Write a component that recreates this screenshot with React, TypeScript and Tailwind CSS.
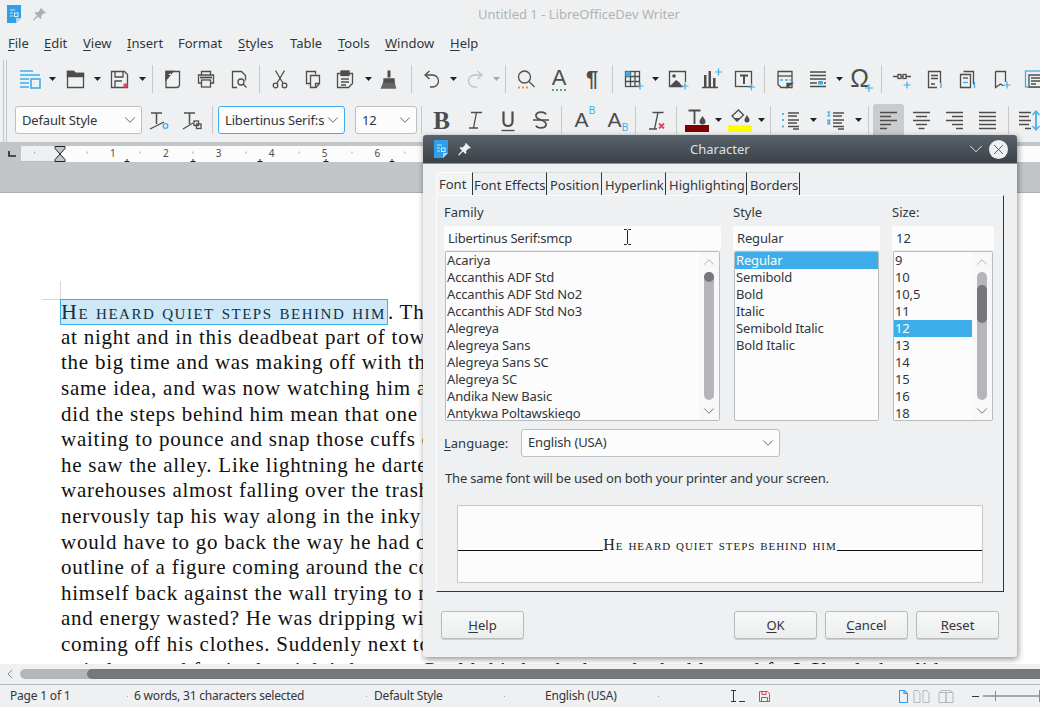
import type { ReactNode } from "react";
import { ChevronDown, ChevronLeft, ChevronUp, X } from "lucide-react";

const INK = "#4d4d4d";
const BLUE = "#3daee9";

function Ic({ children }: { children: ReactNode }) {
  return (
    <svg width="24" height="24" viewBox="0 0 24 24" fill="none" stroke={INK} strokeWidth="1.3">
      {children}
    </svg>
  );
}

function Btn({ children, className = "" }: { children: ReactNode; className?: string }) {
  return <div className={`w-[33px] h-[32px] shrink-0 flex items-center justify-center ${className}`}>{children}</div>;
}

function Arrow({ className = "w-[12px]", off = false }: { className?: string; off?: boolean }) {
  return (
    <div className={`shrink-0 flex items-center justify-center ${className}`}>
      <svg width="7" height="4" viewBox="0 0 7 4">
        <path d="M0 0h7L3.5 4z" fill={off ? "#a5a7a9" : "#222"} />
      </svg>
    </div>
  );
}

function Sep() {
  return (
    <div className="w-[8px] shrink-0 flex justify-center">
      <div className="w-px h-[28px] bg-[#c6c8ca]" />
    </div>
  );
}

function Plus({ x = 18, y = 18 }: { x?: number; y?: number }) {
  return <path d={`M${x - 3.5} ${y}h7M${x} ${y - 3.5}v7`} stroke={BLUE} strokeWidth="1.2" />;
}

function Combo({ text, className, focus = false }: { text: string; className: string; focus?: boolean }) {
  return (
    <div
      className={`h-[28px] shrink-0 flex items-center rounded-[3px] border bg-[#fcfcfc] pl-[6px] pr-[2px] text-[13px] tracking-[-0.15px] text-[#31363b] ${
        focus ? "border-[#3daee9]" : "border-[#bcbfc1]"
      } ${className}`}
    >
      <span className="flex-1 overflow-hidden whitespace-nowrap">{text}</span>
      <ChevronDown size={18} strokeWidth={1} color="#31363b" className="shrink-0" />
    </div>
  );
}

function DocIcon({ className = "" }: { className?: string }) {
  return (
    <svg width="14" height="18" viewBox="0 0 14 18" className={className}>
      <path d="M0 0h14v13l-5 5H0z" fill="#2f9fe8" />
      <path d="M3 5h5M3 8h3M3 11h3" stroke="#bfe3fa" strokeWidth="1" />
      <rect x="7.5" y="8" width="3.5" height="3.5" fill="none" stroke="#d8effc" strokeWidth="1" />
      <path d="M9 18l5-5H9z" fill="#a9d8f5" />
    </svg>
  );
}

function Pin({ color }: { color: string }) {
  return (
    <svg width="13" height="13" viewBox="0 0 13 13">
      <path d="M8 0l5 5-1.2.6-1-.4L8 8l.4 2-1 1-2.4-2.6L1 12.5 0 12l4-4.4L1.6 5l1-1 2 .4L7.4 1.6 7 .8z" fill={color} />
    </svg>
  );
}

function ToolbarOne() {
  return (
    <div className="h-[42px] flex items-center pl-[0.5px]">
      <Btn>
        <Ic>
          <path d="M2 4h13M2 8h20M2 12h9M2 16h9M2 20h9" stroke={BLUE} strokeWidth="1.6" />
          <rect x="13" y="12" width="9" height="9" stroke={BLUE} strokeWidth="1.6" />
        </Ic>
      </Btn>
      <Arrow />
      <Btn>
        <Ic>
          <path d="M4.5 4.5h6l2 2h8v14h-16z" />
          <path d="M4.5 4.5h6l2 2h8v3h-16z" fill={INK} />
        </Ic>
      </Btn>
      <Arrow />
      <Btn>
        <Ic>
          <path d="M3.5 4.5h13l3 3v13h-16z" />
          <path d="M7 5v5h8V5M7 20v-6h7" />
          <rect x="15.5" y="16.5" width="4" height="4" fill="#e0475b" stroke="none" />
        </Ic>
      </Btn>
      <Arrow />
      <Sep />
      <Btn>
        <Ic>
          <path d="M5 4.5h13.5v13c0 1.800-1 3-3 3h-10.500z" />
          <path d="M5 4.500h7L5 13z" fill={INK} />
          <path d="M7 8l3-2v2z" fill="#eee" stroke="none" />
        </Ic>
      </Btn>
      <Btn>
        <Ic>
          <path d="M7.500 8V4.500h9V8M7.500 16H4.500v-8h15v8h-3" />
          <rect x="7.500" y="13" width="9" height="7" />
          <path d="M6 10.500h12" strokeWidth="1.800" />
        </Ic>
      </Btn>
      <Btn>
        <Ic>
          <path d="M10 20.500H5.500v-16h9l4 4v5" />
          <circle cx="14" cy="15" r="3" />
          <path d="M16 17l3.500 3.500" />
        </Ic>
      </Btn>
      <Sep />
      <Btn>
        <Ic>
          <circle cx="7.500" cy="18.500" r="2.300" />
          <circle cx="16.500" cy="18.500" r="2.300" />
          <path d="M8.800 16.500L16.500 3.500M15.200 16.500L7.500 3.500" />
        </Ic>
      </Btn>
      <Btn>
        <Ic>
          <path d="M9 16.500H5.500v-12h9v3" />
          <path d="M9.500 8.500h9v8l-3.500 4h-5.500z" />
          <path d="M14.500 20.500v-4h4" />
        </Ic>
      </Btn>
      <Btn className="pr-[3px]">
        <Ic>
          <path d="M8 6.500H4.500v14h11l4-4v-10H16" />
          <rect x="8" y="4" width="8" height="4.500" fill={INK} />
          <path d="M8 12h8M8 15h8M8 18h5" />
        </Ic>
      </Btn>
      <Arrow />
      <Btn className="pr-[4px]">
        <Ic>
          <path d="M12 3.500v7" strokeWidth="3" />
          <path d="M7 12h10v3H7z" fill={INK} />
          <path d="M7 15h10l1.500 6h-14z" fill={INK} opacity="0.85" />
        </Ic>
      </Btn>
      <Sep />
      <Btn>
        <Ic>
          <path d="M9.500 4L5 8l4.500 4" />
          <path d="M5 8h7.500a5.500 5.500 0 0 1 0 12H10" />
        </Ic>
      </Btn>
      <Arrow className="w-[10px]" />
      <Btn>
        <Ic>
          <g stroke="#c0c2c4">
            <path d="M14.500 4L19 8l-4.500 4" />
            <path d="M19 8h-7.500a5.500 5.500 0 0 0 0 12H14" />
          </g>
        </Ic>
      </Btn>
      <Arrow className="w-[10px]" off />
      <Sep />
      <Btn>
        <Ic>
          <circle cx="10.500" cy="10" r="6" />
          <path d="M15 14.500l5.500 5.500" />
          <path d="M4 20.500h2M8 20.500h2M12 20.500h2" stroke="#f08a5d" strokeWidth="1.800" />
        </Ic>
      </Btn>
      <Btn>
        <div className="relative h-[24px] w-[20px] text-center">
          <span className="font-['Liberation_Sans',sans-serif] text-[22px] leading-[22px] text-[#4d4d4d]">A</span>
          <div className="mt-[-1px] flex justify-center gap-[2px]">
            <div className="w-[2px] h-[2px] bg-[#4caf6e]" />
            <div className="w-[2px] h-[2px] bg-[#4caf6e]" />
            <div className="w-[2px] h-[2px] bg-[#4caf6e]" />
            <div className="w-[2px] h-[2px] bg-[#4caf6e]" />
          </div>
        </div>
      </Btn>
      <Btn>
        <span className="font-['Liberation_Sans',sans-serif] text-[22px] font-bold leading-none text-[#4d4d4d]">¶</span>
      </Btn>
      <Sep />
      <Btn>
        <Ic>
          <rect x="4.500" y="4.500" width="14" height="15" />
          <path d="M4.500 9.500h14M4.500 14.500h14M9.500 4.500v15M14 4.500v15" />
          <rect x="4.500" y="4.500" width="5" height="5" fill={BLUE} stroke="none" />
          <Plus x={19} y={19} />
        </Ic>
      </Btn>
      <Arrow />
      <Btn>
        <Ic>
          <path d="M17 19.500H3.500v-15h16V15" />
          <circle cx="8" cy="9" r="1.800" fill={INK} stroke="none" />
          <path d="M4 19l6-6 3 2 3 4z" fill={INK} stroke="none" />
          <Plus x={19} y={19} />
        </Ic>
      </Btn>
      <Btn>
        <Ic>
          <path d="M3 20.500h16" strokeWidth="1.500" />
          <path d="M5 8h2.500v12H5zM9.500 4H12v16H9.500zM14 11h2.500v9H14z" fill={INK} stroke="none" />
          <Plus x={19.500} y={5} />
        </Ic>
      </Btn>
      <Btn>
        <Ic>
          <rect x="3.500" y="4.500" width="16" height="15" />
          <path d="M8 8.500h8M12 8.500V17" strokeWidth="2" />
          <Plus x={19.500} y={20} />
        </Ic>
      </Btn>
      <Sep />
      <Btn>
        <Ic>
          <path d="M5 4.500h14v16H8l-3-3z" />
          <path d="M5 9h14" strokeWidth="1.300" />
          <path d="M7 13h3M12 13h3M16.500 13h2" stroke={BLUE} />
          <path d="M14 20.500l5-4h-5z" fill={INK} />
        </Ic>
      </Btn>
      <Btn>
        <Ic>
          <path d="M4 5h16M4 8.500h16M4 12h16M4 19.500h16" />
          <rect x="12" y="14" width="5" height="3.500" fill={BLUE} stroke="none" />
          <path d="M4 16h7M18 16h2" />
        </Ic>
      </Btn>
      <Arrow className="w-[10px]" />
      <Btn className="pr-[3px]">
        <div className="relative">
          <span className="font-['Liberation_Sans',sans-serif] text-[25px] leading-none text-[#4d4d4d]">Ω</span>
          <svg width="8" height="8" viewBox="0 0 8 8" className="absolute right-[-4px] bottom-[0px]">
            <path d="M0 4h8M4 0v8" stroke={BLUE} strokeWidth="1.200" />
          </svg>
        </div>
      </Btn>
      <Sep />
      <Btn>
        <Ic>
          <path d="M3 9.500h5M16 9.500h5" />
          <rect x="8" y="7.500" width="3" height="4" />
          <rect x="13" y="7.500" width="3" height="4" />
          <path d="M11 9.500h2" />
          <Plus x={17} y={18} />
        </Ic>
      </Btn>
      <Btn>
        <Ic>
          <path d="M14 20.500H5.500v-16h12V16" />
          <path d="M8 8.500h7M8 11.500h7M8 17h4" />
          <path d="M18 16v5" stroke={BLUE} strokeWidth="1.300" />
        </Ic>
      </Btn>
      <Btn>
        <Ic>
          <path d="M7.500 4.500h10v13" />
          <path d="M4.500 7.500h10v13h-10z" />
          <path d="M7 11h5" />
          <path d="M7 15.500h5" stroke={BLUE} />
          <path d="M18.500 15v6" stroke={BLUE} />
        </Ic>
      </Btn>
      <Btn>
        <Ic>
          <path d="M6.500 4.500h10V15M6.500 4.500v16l5-3.500 3 2" />
          <Plus x={18} y={18} />
        </Ic>
      </Btn>
      <Btn>
        <Ic>
          <rect x="3.500" y="4" width="17" height="16" stroke={BLUE} />
          <path d="M7 8h12v12H7z" fill="#eff0f1" />
          <path d="M9 11h9M9 14h9M9 17h5" />
        </Ic>
      </Btn>
    </div>
  );
}

function ToolbarTwo() {
  return (
    <div className="h-[41px] flex items-center pl-[0.5px]">
      <Combo text="Default Style" className="ml-[1.500px] w-[127px]" />
      <Btn>
        <Ic>
          <path d="M4 5h11M9.500 5v11" strokeWidth="1.500" />
          <path d="M3 21l14-7" />
          <circle cx="18.500" cy="18" r="2.300" stroke={BLUE} />
        </Ic>
      </Btn>
      <Btn>
        <Ic>
          <path d="M4 5h11M9.500 5v11" strokeWidth="1.500" />
          <path d="M3 21l10-6" />
          <rect x="14" y="13" width="4.500" height="4.500" />
          <rect x="16.500" y="16" width="4.500" height="4.500" />
        </Ic>
      </Btn>
      <Sep />
      <Combo text="Libertinus Serif:smcp" focus className="ml-[2px] w-[127px]" />
      <Combo text="12" className="ml-[10px] w-[62px]" />
      <Sep />
      <Btn>
        <span className="font-['Liberation_Serif',serif] text-[25px] font-bold leading-none text-[#4d4d4d]">B</span>
      </Btn>
      <Btn>
        <Ic>
          <path d="M8 4.500h11M6 20h9M13.500 4.500L10.500 20" />
        </Ic>
      </Btn>
      <Btn>
        <Ic>
          <path d="M7.500 3.500v10c0 6 9 6 9 0v-10" strokeWidth="2.200" />
          <path d="M5.500 22.500h13" strokeWidth="1.400" />
        </Ic>
      </Btn>
      <Btn>
        <Ic>
          <path d="M17 6.500c-1-3-9-3.500-10 .5-.5 2.500 2 4 5 5 3 1 5.500 2.500 5 5-1 4-9 3.500-10 .5" strokeWidth="1.800" />
          <path d="M4 12h16" strokeWidth="1.500" />
        </Ic>
      </Btn>
      <Sep />
      <Btn>
        <div className="relative">
          <span className="font-['Liberation_Sans',sans-serif] text-[21px] leading-none text-[#4d4d4d]">A</span>
          <span className="absolute right-[-7px] top-[-3px] font-['Liberation_Sans',sans-serif] text-[10px] leading-none text-[#3daee9]">B</span>
        </div>
      </Btn>
      <Btn>
        <div className="relative">
          <span className="font-['Liberation_Sans',sans-serif] text-[21px] leading-none text-[#4d4d4d]">A</span>
          <span className="absolute right-[-7px] bottom-[-1px] font-['Liberation_Sans',sans-serif] text-[10px] leading-none text-[#3daee9]">B</span>
        </div>
      </Btn>
      <Sep />
      <Btn>
        <Ic>
          <path d="M8.500 4.500h11M5 21h8M14 4.500L10.500 21" />
          <path d="M15 15.500l5 5M20 15.500l-5 5" stroke="#e0475b" strokeWidth="1.800" />
        </Ic>
      </Btn>
      <Sep />
      <Btn>
        <div className="flex flex-col items-center">
          <svg width="24" height="17" viewBox="0 0 24 17">
            <path d="M3.500 2.500h12M9.500 2.500V16" stroke={INK} strokeWidth="1.800" fill="none" />
            <path d="M17.500 8c2 3 3 4 3 5.500a3 3 0 0 1-6 0c0-1.500 1-2.500 3-5.500z" fill={INK} />
          </svg>
          <div className="w-[24px] h-[7px] bg-[#800000]" />
        </div>
      </Btn>
      <Arrow className="w-[10px]" />
      <Btn>
        <div className="flex flex-col items-center">
          <svg width="24" height="17" viewBox="0 0 24 17">
            <path d="M4 8l6.500-6 5 5-6.500 6z" fill="none" stroke={INK} strokeWidth="1.300" />
            <path d="M4 8l5.500 5 3-3H6z" fill={INK} />
            <path d="M19 7c1.500 2.500 2.500 3.500 2.500 5a2.500 2.500 0 0 1-5 0c0-1.500 1-2.500 2.500-5z" fill={INK} />
          </svg>
          <div className="w-[24px] h-[7px] bg-[#ffff00]" />
        </div>
      </Btn>
      <Arrow className="w-[10px]" />
      <Sep />
      <Btn>
        <Ic>
          <path d="M4 5v2M4 11v2M4 17.500v2" stroke={BLUE} strokeWidth="1.800" />
          <path d="M9 5h11M9 8h9M9 12h11M9 15h9M9 18.500h11M14 21h6" />
        </Ic>
      </Btn>
      <Arrow />
      <Btn>
        <Ic>
          <path d="M3 4h3.500M4.800 4v4M3 8h3.500M3 12h3.500M3 16h3.500M4 12v4M5.500 12v4" stroke={BLUE} strokeWidth="1.200" />
          <path d="M9 5h11M9 8h9M9 12h11M9 15h9M9 18.500h11M14 21h6" />
        </Ic>
      </Btn>
      <Arrow />
      <Sep />
      <Btn>
        <div className="w-[31px] h-[32px] flex items-center justify-center rounded-t-[3px] bg-[#c9cbcd]">
          <Ic>
            <path d="M3 4.500h17M3 8.500h11M3 12.500h17M3 16.500h11M3 20.500h7" />
          </Ic>
        </div>
      </Btn>
      <Btn>
        <Ic>
          <path d="M3 4.500h17M6 8.500h11M3 12.500h17M6 16.500h11M8.500 20.500h6" />
        </Ic>
      </Btn>
      <Btn>
        <Ic>
          <path d="M3 4.500h17M9 8.500h11M3 12.500h17M9 16.500h11M13 20.500h7" />
        </Ic>
      </Btn>
      <Btn>
        <Ic>
          <path d="M3 4.500h17M3 8.500h17M3 12.500h17M3 16.500h17M3 20.500h17" />
        </Ic>
      </Btn>
      <Sep />
      <Btn>
        <Ic>
          <path d="M2 4.500h12M2 8.500h10M2 12.500h12M2 16.500h10M8 20.500h6" />
          <path d="M19 4v16.500" stroke={BLUE} strokeWidth="1.800" />
          <path d="M15.500 7L19 3l3.500 4M15.500 18l3.500 4 3.500-4" stroke={BLUE} strokeWidth="1.400" />
        </Ic>
      </Btn>
    </div>
  );
}

function Ruler() {
  const minor = [34.500, 87, 140, 193, 246, 299, 352, 405, 458, 511, 564, 617, 670, 723, 776, 829, 882, 935, 988];
  const tabs = [127, 193, 260, 326, 392, 458, 524, 590, 656, 722, 788, 854, 920, 986];
  const numbers = [1, 2, 3, 4, 5, 6, 7, 8, 9, 10, 11, 12, 13, 14, 15, 16, 17];
  return (
    <div className="h-[51px] bg-[#c2c6c9] border-b border-[#a9adb0]">
      <div className="mt-[4px] flex h-[16px]">
        <div className="w-[21px] flex items-center justify-center">
          <svg width="8" height="6" viewBox="0 0 8 6" className="ml-[3px]">
            <path d="M1 0v5h7" stroke="#222" strokeWidth="1.600" fill="none" />
          </svg>
        </div>
        <svg width="1019" height="16" viewBox="21 0 1019 16" className="bg-[#fcfcfc]">
          <rect x="21" y="0" width="39" height="16" fill="#eff0f1" />
          <path d="M21 15.500h39" stroke="#b8babc" />
          {minor.map((x) => (
            <path key={x} d={`M${x} 5.500v2`} stroke="#a0a2a4" />
          ))}
          {tabs.map((x) => (
            <path key={x} d={`M${x} 13v3M${x - 2.500} 15.500h5`} stroke="#222" />
          ))}
          {numbers.map((n) => (
            <text key={n} x={60 + n * 52.900} y="11" textAnchor="middle" fontSize="10" fill="#4d4d4d" fontFamily="Noto Sans">
              {n}
            </text>
          ))}
          <path d="M55 0.500h10v2L60 8l5 5.500v2H55v-2L60 8l-5-5.500z" fill="#c2c6c9" stroke="#222" />
        </svg>
      </div>
    </div>
  );
}

const docLines = [
  "at night and in this deadbeat part of town? And at this particular moment, just after he pulled off",
  "the big time and was making off with the greenbacks. Was there another crook who'd had the",
  "same idea, and was now watching him and waiting for a chance to grab the fruit of his labor? Or",
  "did the steps behind him mean that one of many law officers in town was on to him and just",
  "waiting to pounce and snap those cuffs on his wrists? He nervously looked all around. Suddenly",
  "he saw the alley. Like lightning he darted off to the left and disappeared between two",
  "warehouses almost falling over the trash can lying in the middle of the sidewalk. He tried to",
  "nervously tap his way along in the inky darkness and suddenly stiffened: it was a dead-end, he",
  "would have to go back the way he had come. The steps got louder and louder, he saw the black",
  "outline of a figure coming around the corner. Is this the end of the line? he thought pressing",
  "himself back against the wall trying to make himself invisible in the dark, was all that planning",
  "and energy wasted? He was dripping with sweat now, cold and wet, he could smell the fear",
  "coming off his clothes. Suddenly next to him, with a barely noticeable squeak, a door swung",
  "quietly to and fro in the night's breeze. Could this be the hope he had longed for? Slowly he slid",
];

function Document() {
  return (
    <div className="h-[472px] overflow-hidden bg-white font-['Liberation_Serif',serif] text-[#111111] text-[21px] tracking-[0.75px]">
      <div className="mt-[88px] ml-[42px] w-[19px] h-[19px] border-r border-b border-[#d6d6d6]" />
      <div className="-mt-px pl-[60px] h-[26px] leading-[26px] whitespace-nowrap">
        <span className="inline-block w-[328px] h-[26px] overflow-hidden border border-[#3daee9] bg-[#cde8f7] text-[#12303f] text-[22px] leading-[24px] [font-variant:small-caps] whitespace-nowrap tracking-[1.5px]">
          He heard quiet steps behind him
        </span>
        <span className="align-top">. That didn't bode well. Who could be following him this late</span>
      </div>
      {docLines.map((line) => (
        <div key={line} className="pl-[61px] h-[25.600px] leading-[25.600px] whitespace-nowrap">
          {line}
        </div>
      ))}
    </div>
  );
}

function ScrollBar() {
  return (
    <div className="h-[20px] flex items-center">
      <div className="w-[20px] flex justify-center">
        <ChevronLeft size={16} strokeWidth={1} color="#555" />
      </div>
      <div className="flex-1 h-[10px] rounded-l-[5px] bg-[#b4b6b9] pl-[67px]">
        <div className="h-full rounded-l-[5px] bg-[#75777c]" />
      </div>
    </div>
  );
}

function Dot() {
  return <div className="w-px h-px shrink-0 bg-[#a8aaac]" />;
}

function StatusBar() {
  return (
    <div className="h-[23px] flex items-center border-t border-[#b5b7b9] text-[12px] tracking-[-0.2px] text-[#31363b] whitespace-nowrap">
      <span className="ml-[10px] w-[117px]">Page 1 of 1</span>
      <Dot />
      <span className="ml-[6px] w-[232px]">6 words, 31 characters selected</span>
      <Dot />
      <span className="ml-[7px] w-[130px]">Default Style</span>
      <Dot />
      <span className="ml-[40px] w-[113px]">English (USA)</span>
      <Dot />
      <svg width="16" height="13" viewBox="0 0 16 13" className="ml-[71px] mr-[8px]">
        <path d="M1 .5h5M1 11.500h5M3.500 .5v11M9 11.500h6" stroke="#31363b" fill="none" />
      </svg>
      <svg width="11" height="11" viewBox="0 0 11 11" className="ml-[5px]">
        <path d="M.5 .5h8l2 2v8H.5z" fill="none" stroke="#da4453" />
        <path d="M3 .5v3h4v-3M2.500 10.500V6.500h6v4" fill="none" stroke="#da4453" />
      </svg>
      <svg width="62" height="13" viewBox="0 0 62 13" className="ml-[129px]" fill="none">
        <path d="M.5 .5h5l3 3v9H.5zM5 .5v3h3" stroke="#2d9cee" strokeWidth="1.100" />
        <path d="M15 .5h4l2 3v9h-6zM24 .5h4l2 3v9h-6z" stroke="#b5b7b9" />
        <path d="M40 2.500h7v10h-7zM47 2.500h7v10h-7zM40 2.500l3-2h4l4 0 3 2" stroke="#b5b7b9" />
      </svg>
      <div className="ml-[11px] w-[7px] h-px bg-[#31363b]" />
      <div className="ml-[4px] flex-1 relative h-[2px] bg-[#a5a7a9]">
        <div className="absolute left-[12px] top-[-4px] h-[10px] w-px bg-[#888a8c]" />
        <div className="absolute right-[-1px] top-[-5px] h-[12px] w-[2px] bg-[#888a8c]" />
      </div>
    </div>
  );
}

function Tab({ label, active = false, className }: { label: string; active?: boolean; className: string }) {
  return (
    <div
      className={`h-full shrink-0 whitespace-nowrap border-r border-[#31363b] ${
        active
          ? "pt-[2px] border-t border-l border-t-[#fcfcfc] border-l-[#fcfcfc] pl-[2px] rounded-tl-[2px]"
          : "pt-[3px] border-t border-t-[#d8dadb]"
      } ${className}`}
    >
      {label}
    </div>
  );
}

function ListBox({
  items,
  selected,
  scroll,
}: {
  items: string[];
  selected?: string;
  scroll?: ReactNode;
}) {
  return (
    <div className="mt-px mx-px h-[170px] flex overflow-hidden rounded-[2px] border border-[#b9bcbe] bg-[#fcfcfc] tracking-[-0.15px]">
      <div className="flex-1 min-w-0">
        {items.map((item) => (
          <div
            key={item}
            className={`h-[17px] leading-[17px] pl-[1px] whitespace-nowrap ${
              item === selected ? "bg-[#3daee9] text-[#fcfcfc]" : ""
            }`}
          >
            {item}
          </div>
        ))}
      </div>
      {scroll}
    </div>
  );
}

function ListScroll({ children }: { children: ReactNode }) {
  return (
    <div className="w-[20px] shrink-0 flex flex-col items-center bg-[#f8f8f8]">
      <ChevronUp size={18} strokeWidth={1} color="#9a9c9e" className="mt-px" />
      <div className="mt-px w-[10px] h-[128px] shrink-0 rounded-[5px] bg-[#b4b6b9]">{children}</div>
      <ChevronDown size={18} strokeWidth={1} color="#4d4d4d" className="mt-[2px]" />
    </div>
  );
}

function DialogButton({ children }: { children: ReactNode }) {
  return (
    <div className="w-[83px] h-[28px] pt-px flex items-center justify-center rounded-[3px] border border-[#b8babc] bg-gradient-to-b from-[#f7f8f8] to-[#eceded] shadow-[0_1px_1px_rgba(0,0,0,0.15)]">
      <span>{children}</span>
    </div>
  );
}

function CharacterDialog() {
  return (
    <div className="absolute left-[423px] top-[135px] w-[594px] h-[522px] rounded-[3px] bg-[#eff0f1] shadow-[1px_2px_6px_rgba(0,0,0,0.45)] text-[13px] text-[#31363b]">
      <div className="relative h-[29px] flex items-center rounded-t-[3px] border-b border-[#3daee9] bg-gradient-to-b from-[#59626b] to-[#3b4248] pl-[11px]">
        <DocIcon />
        <div className="ml-[10px]">
          <Pin color="#eff0f1" />
        </div>
        <span className="absolute left-[267px] top-[5px] text-[#dfe1e2]">Character</span>
        <div className="ml-auto mr-[9px] flex items-center gap-[2px]">
          <ChevronDown size={22} strokeWidth={1} color="#eff0f1" />
          <div className="w-[19px] h-[19px] rounded-full bg-[#eff0f1] flex items-center justify-center">
            <X size={17} strokeWidth={1.100} color="#31363b" />
          </div>
        </div>
      </div>

      <div className="mt-[8px] ml-[13px] h-[23px] flex">
        <Tab label="Font" active className="w-[37px] bg-[#f2f3f4]" />
        <Tab label="Font Effects" className="w-[74px] pl-[1px]" />
        <Tab label="Position" className="w-[55px] pl-[3px]" />
        <Tab label="Hyperlink" className="w-[64px] pl-[3px]" />
        <Tab label="Highlighting" className="w-[81px] pl-[3px]" />
        <Tab label="Borders" className="w-[53px] pl-[3px]" />
      </div>

      <div className="ml-[13px] w-[568px] h-[397px] border border-t-[#fcfcfc] border-l-[#fcfcfc] border-r-[#31363b] border-b-[#31363b] pl-[7px]">
        <div className="flex gap-[12px]">
          <div className="w-[277px]">
            <div className="mt-[8px] h-[17px] leading-[17px]">Family</div>
            <div className="mt-[5px] h-[24px] leading-[24px] bg-[#fcfcfc] pl-[4px] tracking-[-0.2px] relative">
              Libertinus Serif:smcp
              <svg width="7" height="16" viewBox="0 0 7 16" className="absolute left-[180px] top-[3px]">
                <path d="M0 .5h2.500l1 1 1-1H7M3.500 1.500v13M0 15.500h2.500l1-1 1 1H7" stroke="#222" fill="none" />
              </svg>
            </div>
            <ListBox
              items={[
                "Acariya",
                "Accanthis ADF Std",
                "Accanthis ADF Std No2",
                "Accanthis ADF Std No3",
                "Alegreya",
                "Alegreya Sans",
                "Alegreya Sans SC",
                "Alegreya SC",
                "Andika New Basic",
                "Antykwa Poltawskiego",
              ]}
              scroll={
                <ListScroll>
                  <div className="w-[10px] h-[10px] rounded-full bg-[#75777c]" />
                </ListScroll>
              }
            />
          </div>
          <div className="w-[147px]">
            <div className="mt-[8px] h-[17px] leading-[17px]">Style</div>
            <div className="mt-[5px] h-[24px] leading-[24px] bg-[#fcfcfc] pl-[4px] tracking-[-0.15px]">Regular</div>
            <ListBox
              selected="Regular"
              items={["Regular", "Semibold", "Bold", "Italic", "Semibold Italic", "Bold Italic"]}
            />
          </div>
          <div className="w-[102px]">
            <div className="mt-[8px] h-[17px] leading-[17px]">Size:</div>
            <div className="mt-[5px] h-[24px] leading-[24px] bg-[#fcfcfc] pl-[4px]">12</div>
            <ListBox
              selected="12"
              items={["9", "10", "10,5", "11", "12", "13", "14", "15", "16", "18"]}
              scroll={
                <ListScroll>
                  <div className="pt-[13px]">
                    <div className="w-[10px] h-[38px] rounded-[5px] bg-[#75777c]" />
                  </div>
                </ListScroll>
              }
            />
          </div>
        </div>

        <div className="mt-[8px] flex items-center">
          <span className="w-[77px] pt-px">
            <span className="underline underline-offset-2">L</span>anguage:
          </span>
          <Combo text="English (USA)" className="w-[259px]" />
        </div>
        <div className="mt-[12px] h-[18px] leading-[18px] pl-px tracking-[-0.19px] whitespace-nowrap">
          The same font will be used on both your printer and your screen.
        </div>
        <div className="mt-[18px] ml-[13px] w-[526px] h-[78px] border border-[#c4c6c8] rounded-[1px] bg-[#fcfcfc] pt-[27px]">
          <div className="h-[18px] flex items-end">
            <div className="flex-1 h-px bg-[#111]" />
            <span className="font-['Liberation_Serif',serif] text-[16px] leading-[18px] mb-[-3px] [font-variant:small-caps] text-[#222] whitespace-nowrap tracking-[0.95px]">
              He heard quiet steps behind him
            </span>
            <div className="flex-1 h-px bg-[#111]" />
          </div>
        </div>
      </div>

      <div className="mt-[19px] px-[18px] flex gap-[8px]">
        <DialogButton>
          <span className="underline underline-offset-2">H</span>elp
        </DialogButton>
        <div className="flex-1" />
        <DialogButton>
          <span className="underline underline-offset-2">O</span>K
        </DialogButton>
        <DialogButton>
          <span className="underline underline-offset-2">C</span>ancel
        </DialogButton>
        <DialogButton>
          <span className="underline underline-offset-2">R</span>eset
        </DialogButton>
      </div>
    </div>
  );
}

const menus = [
  { label: "File", key: "F", w: "w-[36px]" },
  { label: "Edit", key: "E", w: "w-[39px]" },
  { label: "View", key: "V", w: "w-[44px]" },
  { label: "Insert", key: "I", w: "w-[51px]" },
  { label: "Format", key: "", w: "w-[60px]" },
  { label: "Styles", key: "S", w: "w-[52px]" },
  { label: "Table", key: "", w: "w-[48px]" },
  { label: "Tools", key: "T", w: "w-[47px]" },
  { label: "Window", key: "W", w: "w-[65px]" },
  { label: "Help", key: "H", w: "w-[36px]" },
];

export default function App() {
  return (
    <div className="relative w-[1040px] h-[707px] overflow-hidden flex flex-col bg-[#eff0f1] font-['Noto_Sans',sans-serif] text-[13px] text-[#31363b]">
      <div className="h-[29px] flex items-center pl-[7px]">
        <DocIcon />
        <div className="ml-[12px] opacity-40">
          <Pin color="#4d4d4d" />
        </div>
        <span className="ml-[432px] text-[#b0b3b5]">Untitled 1 - LibreOfficeDev Writer</span>
      </div>

      <div className="h-[29px] flex items-center pl-[8px] pt-px">
        {menus.map((m) => (
          <div key={m.label} className={`${m.w} shrink-0 whitespace-nowrap`}>
            {m.key ? (
              <>
                <span className="underline underline-offset-2">{m.key}</span>
                {m.label.slice(1)}
              </>
            ) : (
              m.label
            )}
          </div>
        ))}
      </div>

      <div className="flex">
        <div className="ml-[3px] w-[10px] shrink-0 pt-[2px]">
          <div className="w-[4px] h-[82px] border-x border-[#c4c6c8]" />
        </div>
        <div className="min-w-0 flex-1 overflow-hidden">
          <ToolbarOne />
          <ToolbarTwo />
        </div>
      </div>

      <Ruler />
      <Document />
      <ScrollBar />
      <StatusBar />
      <CharacterDialog />
    </div>
  );
}
